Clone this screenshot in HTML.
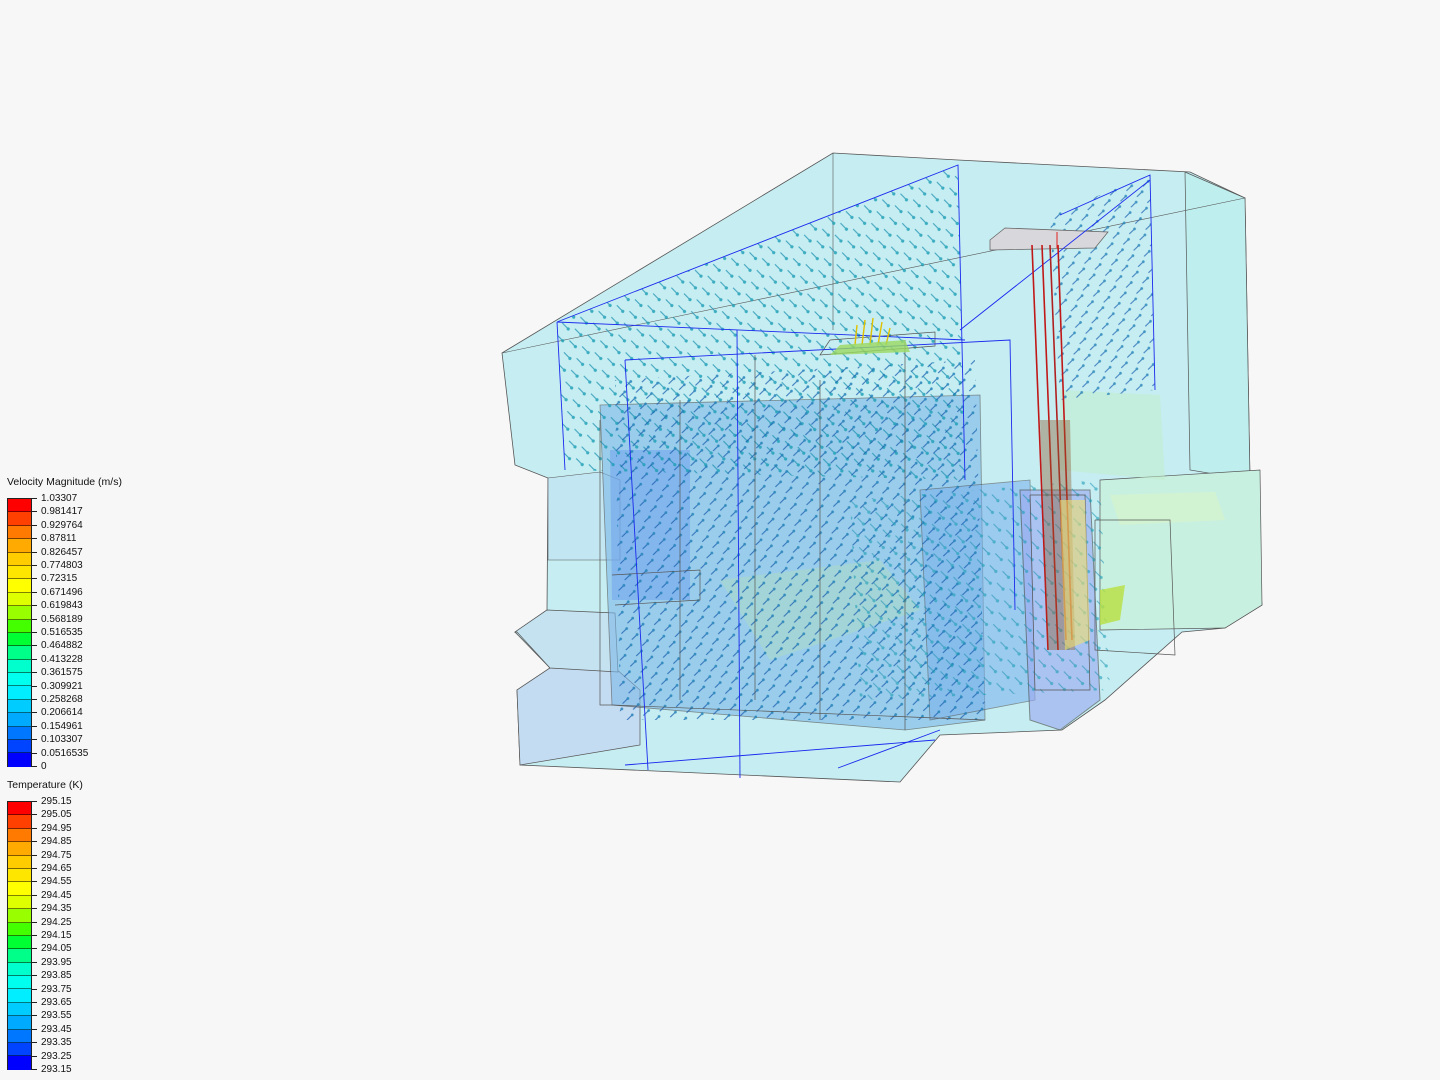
<!DOCTYPE html>
<html><head><meta charset="utf-8"><style>
html,body{margin:0;padding:0;background:#f7f7f7;width:1440px;height:1080px;overflow:hidden;font-family:"Liberation Sans","DejaVu Sans",sans-serif}
.t{position:absolute;font-size:10px;color:#111;white-space:nowrap}
.title{position:absolute;left:7px;font-size:10.5px;color:#111}
.bar{position:absolute;left:7px;width:25px;border:1px solid #222;box-sizing:border-box}
.bar div{height:13.4px;border-bottom:1px solid rgba(0,0,0,.5);box-sizing:border-box}
.tick{position:absolute;left:32px;width:5px;height:1px;background:#222}
</style></head><body>
<svg width="1440" height="1080" style="position:absolute;left:0;top:0">
<defs>
<pattern id="arr" width="14" height="13" patternUnits="userSpaceOnUse" patternTransform="rotate(25)">
<line x1="2" y1="3" x2="10" y2="6" stroke="#1a8fb0" stroke-width="1.1"/>
<circle cx="10" cy="6" r="1.6" fill="#1a9db5"/>
</pattern>
<pattern id="arr2" width="12" height="12" patternUnits="userSpaceOnUse" patternTransform="rotate(-60)">
<line x1="2" y1="3" x2="9" y2="5" stroke="#1a5fb0" stroke-width="1"/>
<circle cx="9" cy="5" r="1.4" fill="#2080b8"/>
</pattern>
</defs>
<polygon points="502,353 833,153 958,160 1190,172 1245,198 1250,480 1262,605 1225,628 1182,632 1105,700 1062,730 940,735 900,782 520,765 517,690 550,668 515,632 547,610 548,478 515,465" fill="#c6eef2" stroke="#555" stroke-width="0.8"/>
<polygon points="1185,172 1245,198 1250,480 1190,470" fill="#bfeeee" stroke="#555" stroke-width="0.7"/>
<polygon points="1100,480 1260,470 1262,605 1225,628 1100,630" fill="#c8f0e0" stroke="#555" stroke-width="0.7"/>
<polygon points="1110,495 1215,492 1225,520 1120,525" fill="#d8f5c8" opacity="0.6"/>
<line x1="502" y1="353" x2="1245" y2="198" stroke="#555" stroke-width="0.6"/>
<line x1="833" y1="153" x2="833" y2="330" stroke="#555" stroke-width="0.6"/>
<polygon points="517,690 550,668 615,668 640,690 640,745 520,765" fill="#c4dcf2" stroke="#555" stroke-width="0.7"/>
<polygon points="515,632 547,610 615,613 618,672 550,668 517,632" fill="#c4e2f0" stroke="#555" stroke-width="0.7"/>
<polygon points="548,478 600,472 620,480 620,560 548,560" fill="#c2e6f2" stroke="#555" stroke-width="0.6"/>
<polygon points="600,405 980,395 985,720 905,730 612,705" fill="#7db8e8" opacity="0.6" stroke="#444" stroke-width="0.8"/>
<polygon points="610,450 690,450 690,600 612,600" fill="#6aa0ee" opacity="0.5"/>
<polygon points="920,490 1030,480 1035,700 930,720" fill="#78b0ec" opacity="0.55" stroke="#444" stroke-width="0.8"/>
<polygon points="1020,490 1090,490 1100,700 1060,730 1030,720" fill="#9aa8f0" opacity="0.6" stroke="#444" stroke-width="1"/>
<polygon points="720,580 880,560 920,610 770,660" fill="#b9e6a8" opacity="0.3"/>
<polygon points="1060,390 1160,395 1165,480 1060,470" fill="#c0ecc8" opacity="0.5"/>
<polygon points="557,322 958,165 965,480 565,470" fill="url(#arr)" opacity="0.8"/>
<polygon points="615,380 975,360 985,720 620,720" fill="url(#arr2)" opacity="0.85"/>
<polygon points="1050,215 1150,175 1155,390 1060,400" fill="url(#arr2)" opacity="0.8"/>
<polygon points="850,500 1100,480 1110,690 860,700" fill="url(#arr)" opacity="0.6"/>
<g fill="none" stroke="#555" stroke-width="0.7">
<polyline points="600,420 600,705 612,705 985,720"/>
<polyline points="680,400 680,700"/>
<polyline points="755,355 755,700"/>
<polyline points="820,380 820,720"/>
<polyline points="905,340 905,730"/>
<polyline points="830,340 935,332 935,346 820,355 830,340"/>
<polyline points="612,575 700,570 700,600 615,605"/>
<polyline points="1095,520 1170,520 1175,655 1095,650 1095,520"/>
<polyline points="1030,495 1085,495 1090,690 1035,690 1030,495"/>
</g>
<polygon points="990,240 1005,228 1108,232 1095,248 990,250" fill="#d8d8dc" stroke="#666" stroke-width="0.8"/>
<g fill="none" stroke="#1a2aee" stroke-width="0.9">
<polyline points="557,322 958,165 965,480"/>
<polyline points="557,322 565,470"/>
<polyline points="557,322 965,340"/>
<polyline points="625,360 1010,340 1015,610"/>
<polyline points="625,360 648,770"/>
<polyline points="737,330 740,778"/>
<polyline points="838,768 940,730"/>
<polyline points="1060,215 1150,175 1155,390"/>
<polyline points="960,330 1150,180"/>
<polyline points="625,765 935,740"/>
</g>
<g stroke="#e0c000" stroke-width="1.4">
<line x1="855" y1="345" x2="857" y2="325"/><line x1="862" y1="345" x2="865" y2="320"/><line x1="870" y1="345" x2="873" y2="318"/><line x1="878" y1="345" x2="882" y2="322"/><line x1="886" y1="345" x2="890" y2="328"/>
</g>
<polygon points="840,345 905,340 910,352 830,355" fill="#9ad860" opacity="0.8"/>
<g stroke-width="1.6">
<line x1="1032" y1="245" x2="1048" y2="650" stroke="#c01818"/>
<line x1="1042" y1="245" x2="1058" y2="650" stroke="#c01818"/>
<line x1="1050" y1="245" x2="1066" y2="640" stroke="#b02020"/>
<line x1="1058" y1="245" x2="1072" y2="640" stroke="#c01818"/>
</g>
<polygon points="1040,420 1070,420 1075,650 1048,650" fill="#8a5a30" opacity="0.4"/>
<polygon points="1060,500 1085,500 1090,640 1065,650" fill="#f0e070" opacity="0.6"/>
<polygon points="1100,590 1125,585 1120,620 1100,625" fill="#b8e040" opacity="0.8"/>
<line x1="1057" y1="232" x2="1057" y2="248" stroke="#e02020" stroke-width="1"/>
</svg>

<div class="title" style="top:476px">Velocity Magnitude (m/s)</div>
<div class="bar" style="top:498px;height:269px">
<div style="background:#ff0000"></div><div style="background:#ff4000"></div><div style="background:#ff7a00"></div><div style="background:#ffaa00"></div><div style="background:#ffcc00"></div><div style="background:#ffe600"></div><div style="background:#ffff00"></div><div style="background:#ddff00"></div><div style="background:#99ff00"></div><div style="background:#44ff00"></div><div style="background:#00ff33"></div><div style="background:#00ff88"></div><div style="background:#00ffcc"></div><div style="background:#00ffee"></div><div style="background:#00eeff"></div><div style="background:#00ccff"></div><div style="background:#00aaff"></div><div style="background:#0077ff"></div><div style="background:#0044ff"></div><div style="background:#0000ff;border:0"></div>
</div>
<div class="title" style="top:779px">Temperature (K)</div>
<div class="bar" style="top:801px;height:269px">
<div style="background:#ff0000"></div><div style="background:#ff4000"></div><div style="background:#ff7a00"></div><div style="background:#ffaa00"></div><div style="background:#ffcc00"></div><div style="background:#ffe600"></div><div style="background:#ffff00"></div><div style="background:#ddff00"></div><div style="background:#99ff00"></div><div style="background:#44ff00"></div><div style="background:#00ff33"></div><div style="background:#00ff88"></div><div style="background:#00ffcc"></div><div style="background:#00ffee"></div><div style="background:#00eeff"></div><div style="background:#00ccff"></div><div style="background:#00aaff"></div><div style="background:#0077ff"></div><div style="background:#0044ff"></div><div style="background:#0000ff;border:0"></div>
</div>
<div id="labels"></div>
<script>
var v=["1.03307","0.981417","0.929764","0.87811","0.826457","0.774803","0.72315","0.671496","0.619843","0.568189","0.516535","0.464882","0.413228","0.361575","0.309921","0.258268","0.206614","0.154961","0.103307","0.0516535","0"];
var h="";
for(var i=0;i<21;i++){var y=498+i*13.4;h+='<div class="tick" style="top:'+y+'px"></div><div class="t" style="left:41px;top:'+(y-5)+'px">'+v[i]+'</div>';}
for(var i=0;i<21;i++){var y=801+i*13.4;h+='<div class="tick" style="top:'+y+'px"></div><div class="t" style="left:41px;top:'+(y-5)+'px">'+(295.15-i*0.1).toFixed(2)+'</div>';}
document.getElementById("labels").innerHTML=h;
</script>
</body></html>
